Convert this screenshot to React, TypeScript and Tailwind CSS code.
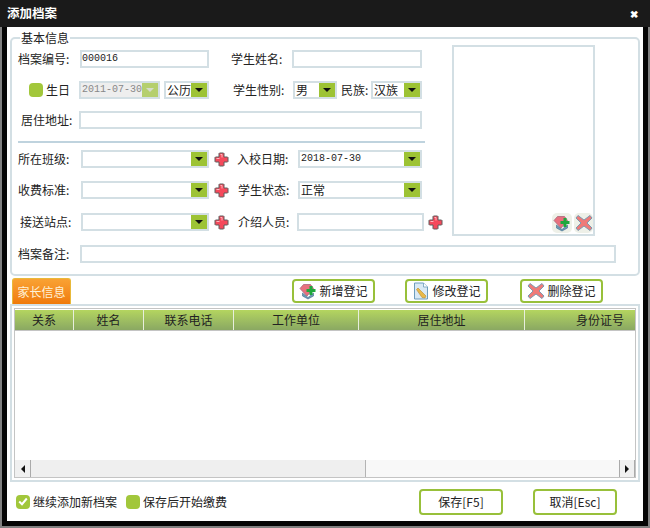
import type { ReactNode } from 'react';

const cols = [
  { name: '关系', w: 'w-[59px] justify-center' },
  { name: '姓名', w: 'w-[70px] justify-center' },
  { name: '联系电话', w: 'w-[90px] justify-center' },
  { name: '工作单位', w: 'w-[125px] justify-center' },
  { name: '居住地址', w: 'w-[166px] justify-center' },
  { name: '身份证号', w: 'w-[111px] pl-[51px]' },
];

function Label({ w, children, className = '' }: { w: string; children: ReactNode; className?: string }) {
  return <span className={`shrink-0 whitespace-nowrap text-[12px] text-[#222] ${w} ${className}`}>{children}</span>;
}

function TextBox({ w, value = '' }: { w: string; value?: string }) {
  return (
    <div className={`h-[18px] shrink-0 border-2 border-[#d3dfe4] bg-white font-['Liberation_Mono',monospace] text-[10px] leading-[14px] text-[#222] ${w}`}>
      {value}
    </div>
  );
}

function Select({ w, value = '', mono = false, disabled = false }: { w: string; value?: string; mono?: boolean; disabled?: boolean }) {
  return (
    <div className={`flex h-[18px] shrink-0 border-2 border-[#d3dfe4] ${disabled ? 'bg-[#eeeeee] text-[#888]' : 'bg-white text-[#222]'} ${w}`}>
      <span className={`min-w-0 flex-1 whitespace-nowrap pl-[1px] leading-[14px] ${mono ? "font-['Liberation_Mono',monospace] text-[10px]" : 'text-[12px]'}`}>{value}</span>
      <span className={`flex w-[16px] shrink-0 items-center justify-center ${disabled ? 'bg-[#b5cf6e]' : 'bg-[#9dc334]'}`}>
        <span className={`h-0 w-0 border-x-[4px] border-t-[4px] border-x-transparent ${disabled ? 'border-t-[#d5dccb]' : 'border-t-[#111]'}`} />
      </span>
    </div>
  );
}

function PlusIcon({ className = '' }: { className?: string }) {
  return (
    <svg width="15" height="15" viewBox="0 0 15 15" className={`shrink-0 ${className}`}>
      <path d="M5.5 1h4l.5 .5V5h3.5l.5 .5v4l-.5 .5H10v3.500l-.5 .5h-4l-.5-.5V10H1.500L1 9.500v-4L1.500 5H5V1.500z" fill="#f5495b" stroke="#5d5d5d" strokeWidth="1" strokeLinejoin="round" />
      <path d="M6.500 2.500h1.500v3M2.500 6.500h3" fill="none" stroke="#ffb6bd" strokeWidth="1" />
    </svg>
  );
}

function AddBookIcon() {
  return (
    <svg width="18" height="18" viewBox="0 0 18 18" className="shrink-0">
      <path d="M3.500 11l5.500 4.500 5.500-4.500v3l-5.500 3-5.500-3z" fill="#6f9ab5" stroke="#3f6c8a" strokeWidth="0.6" />
      <path d="M1 6.500l3.500-4h7l3 4-6.500 7.500z" fill="#e8707e" stroke="#a9677a" strokeWidth="0.8" />
      <path d="M10.500 4h3v3h3v3h-3v3h-3v-3h-3V7h3z" fill="#1fa83c" />
    </svg>
  );
}

function DeleteIcon() {
  return (
    <svg width="18" height="18" viewBox="0 0 18 18" className="shrink-0">
      <path d="M3 1.500L9 6l6-4.500L17 4l-5 5 5 5-2 2.500L9 12l-6 4.500L1 14l5-5-5-5z" fill="#ef7a78" stroke="#7c9bb2" strokeWidth="1" strokeLinejoin="round" />
    </svg>
  );
}

function EditIcon() {
  return (
    <svg width="18" height="18" viewBox="0 0 18 18" className="shrink-0">
      <path d="M2.500 1h9l4 4v12h-13z" fill="#d9e9f5" stroke="#6d9cbd" strokeWidth="1" />
      <path d="M11.500 1v4h4" fill="#fff" stroke="#6d9cbd" strokeWidth="0.8" />
      <path d="M6 6l8 8-1 2-3-.5-5.500-8z" fill="#e9b949" stroke="#b98a2c" strokeWidth="0.6" />
    </svg>
  );
}

function ActionButton({ icon, label }: { icon: ReactNode; label: string }) {
  return (
    <button className="flex h-[24px] w-[83px] items-center justify-center gap-[2px] rounded-[4px] border-2 border-[#98c03a] bg-white text-[12px] text-[#222]">
      {icon}
      {label}
    </button>
  );
}

function Check({ checked = false }: { checked?: boolean }) {
  return (
    <span className="flex h-[14px] w-[14px] shrink-0 items-center justify-center rounded-[4px] bg-[#a2c73b]">
      {checked && (
        <svg width="10" height="9" viewBox="0 0 10 9">
          <path d="M1.200 4.500L4 7.200 8.800 1.500" fill="none" stroke="#fff" strokeWidth="2" />
        </svg>
      )}
    </span>
  );
}

export default function App() {
  return (
    <div className="flex h-[528px] w-[650px] flex-col overflow-hidden bg-[#050505] font-['Noto_Sans_CJK_SC','Liberation_Sans',sans-serif]">
      {/* Title */}
      <div className="flex h-[27px] shrink-0 items-center justify-between bg-[#1a1a1a] pl-[7px] pr-[12px] text-[12.5px] font-bold text-white">
        <span>添加档案</span>
        <span className="text-[10px] leading-none">✖</span>
      </div>

      <div className="flex min-h-0 flex-1">
        <div className="w-[2px] shrink-0 bg-[#808080]" />
        <div className="ml-[5px] mr-[5px] flex h-[494px] w-[636px] shrink-0 flex-col bg-white pt-[4px] pl-[3px] pr-[3px]">
          {/* 基本信息 */}
          <fieldset className="relative h-[245px] shrink-0 rounded-[5px] border-2 border-[#d3dfe4] pl-[6px] pr-[8px]">
            <legend className="ml-[2px] px-[1px] text-[12px] leading-[13px] text-[#222]">基本信息</legend>
            <div className="mt-[7px] flex h-[199px] gap-[26px]">
              <div className="flex w-[408px] shrink-0 flex-col">
                <div className="mt-[-1px] flex items-center">
                  <Label w="w-[62px]">档案编号:</Label>
                  <TextBox w="w-[129px]" value="000016" />
                  <Label w="w-[61px]" className="ml-[22px]">学生姓名:</Label>
                  <TextBox w="w-[130px]" />
                </div>
                <div className="mt-[13px] flex items-center">
                  <span className="w-[11px]" />
                  <Check />
                  <Label w="w-[33px]" className="ml-[3px]">生日</Label>
                  <Select w="w-[81px]" value="2011-07-30" mono disabled />
                  <span className="w-[4px]" />
                  <Select w="w-[45px]" value="公历" />
                  <Label w="w-[60px]" className="ml-[24px]">学生性别:</Label>
                  <Select w="w-[44px]" value="男" />
                  <Label w="w-[30px]" className="ml-[4px]">民族:</Label>
                  <Select w="w-[51px]" value="汉族" />
                </div>
                <div className="mt-[12px] flex items-center">
                  <Label w="w-[61px]" className="pl-[3px]">居住地址:</Label>
                  <TextBox w="w-[343px]" />
                </div>
                <div className="mt-[12px] h-[2px] w-[407px] bg-[#bfd3de]" />
                <div className="mt-[7px] flex items-center">
                  <Label w="w-[63px]">所在班级:</Label>
                  <Select w="w-[128px]" />
                  <PlusIcon className="ml-[5px]" />
                  <Label w="w-[61px]" className="ml-[8px]">入校日期:</Label>
                  <Select w="w-[124px]" value="2018-07-30" mono />
                </div>
                <div className="mt-[13px] flex items-center">
                  <Label w="w-[63px]">收费标准:</Label>
                  <Select w="w-[128px]" />
                  <PlusIcon className="ml-[5px]" />
                  <Label w="w-[60px]" className="ml-[9px]">学生状态:</Label>
                  <Select w="w-[124px]" value="正常" />
                </div>
                <div className="mt-[14px] flex items-center">
                  <Label w="w-[63px]" className="pl-[2px]">接送站点:</Label>
                  <Select w="w-[128px]" />
                  <PlusIcon className="ml-[5px]" />
                  <Label w="w-[59px]" className="ml-[9px]">介绍人员:</Label>
                  <TextBox w="w-[127px]" />
                  <PlusIcon className="ml-[4px]" />
                </div>
              </div>
              {/* 照片 */}
              <div className="mt-[-6px] flex h-[191px] w-[143px] shrink-0 items-end justify-end gap-[2px] border-2 border-[#d3dfe4] bg-white pb-[1px]">
                <span className="flex h-[20px] w-[20px] items-center justify-center rounded-[5px] bg-[#eef0e8]"><AddBookIcon /></span>
                <span className="flex h-[20px] w-[19px] items-center justify-center rounded-[5px] bg-[#eef0e8]"><DeleteIcon /></span>
              </div>
            </div>
            <div className="mt-[-5px] flex items-center">
              <Label w="w-[62px]">档案备注:</Label>
              <TextBox w="w-[536px]" />
            </div>
          </fieldset>

          {/* 家长信息 */}
          <div className="flex h-[28px] shrink-0 items-end">
            <div className="ml-[2px] flex h-[26px] w-[59px] items-center justify-center rounded-t-[3px] border border-b-0 border-[#e8b93a] bg-gradient-to-b from-[#f9a233] to-[#f07a08] text-[12px] text-[#fff2d8]">
              家长信息
            </div>
            <div className="mb-[1px] ml-[221px] flex gap-[30px]">
              <ActionButton icon={<AddBookIcon />} label="新增登记" />
              <ActionButton icon={<EditIcon />} label="修改登记" />
              <span className="ml-[2px]">
                <ActionButton icon={<DeleteIcon />} label="删除登记" />
              </span>
            </div>
          </div>

          <div className="h-[178px] shrink-0 border-2 border-[#d3dfe4] p-[2px]">
            <div className="flex h-full flex-col border border-[#c4c4c4]">
              <div className="mt-[1px] flex h-[21px] shrink-0 border-b border-[#c4c4c4] bg-gradient-to-b from-[#b4d55f] to-[#8aa862]">
                {cols.map((c) => (
                  <div key={c.name} className={`flex shrink-0 items-center whitespace-nowrap border-r border-r-[#e8eedd] text-[12px] text-[#222] last:border-r-0 ${c.w}`}>
                    {c.name}
                  </div>
                ))}
              </div>
              <div className="flex-1 bg-white" />
              <div className="flex h-[17px] shrink-0 bg-[#f3f3f3]">
                <div className="flex w-[16px] items-center justify-center border-r border-r-[#aaa] bg-[#f0f0f0]">
                  <span className="h-0 w-0 border-y-[4px] border-r-[4px] border-y-transparent border-r-[#111]" />
                </div>
                <div className="w-[335px] border-r border-r-[#b4b4b4] bg-[#efefef]" />
                <div className="flex-1 bg-[#f8f8f8]" />
                <div className="flex w-[16px] items-center justify-center border-x border-x-[#aaa] bg-[#f0f0f0]">
                  <span className="h-0 w-0 border-y-[4px] border-l-[4px] border-y-transparent border-l-[#111]" />
                </div>
              </div>
            </div>
          </div>

          {/* 底部 */}
          <div className="flex flex-1 items-center pl-[6px] pr-[23px] text-[12px] text-[#222]">
            <Check checked />
            <span className="ml-[3px] w-[93px]">继续添加新档案</span>
            <Check />
            <span className="ml-[3px]">保存后开始缴费</span>
            <button className="ml-auto h-[26px] w-[84px] rounded-[4px] border-2 border-[#98c03a] bg-white text-[12px]">保存[F5]</button>
            <button className="ml-[30px] h-[26px] w-[84px] rounded-[4px] border-2 border-[#98c03a] bg-white text-[12px]">取消[Esc]</button>
          </div>
        </div>
        <div className="w-[2px] shrink-0 bg-[#808080]" />
      </div>
      <div className="h-[2px] shrink-0 bg-[#808080]" />
    </div>
  );
}
